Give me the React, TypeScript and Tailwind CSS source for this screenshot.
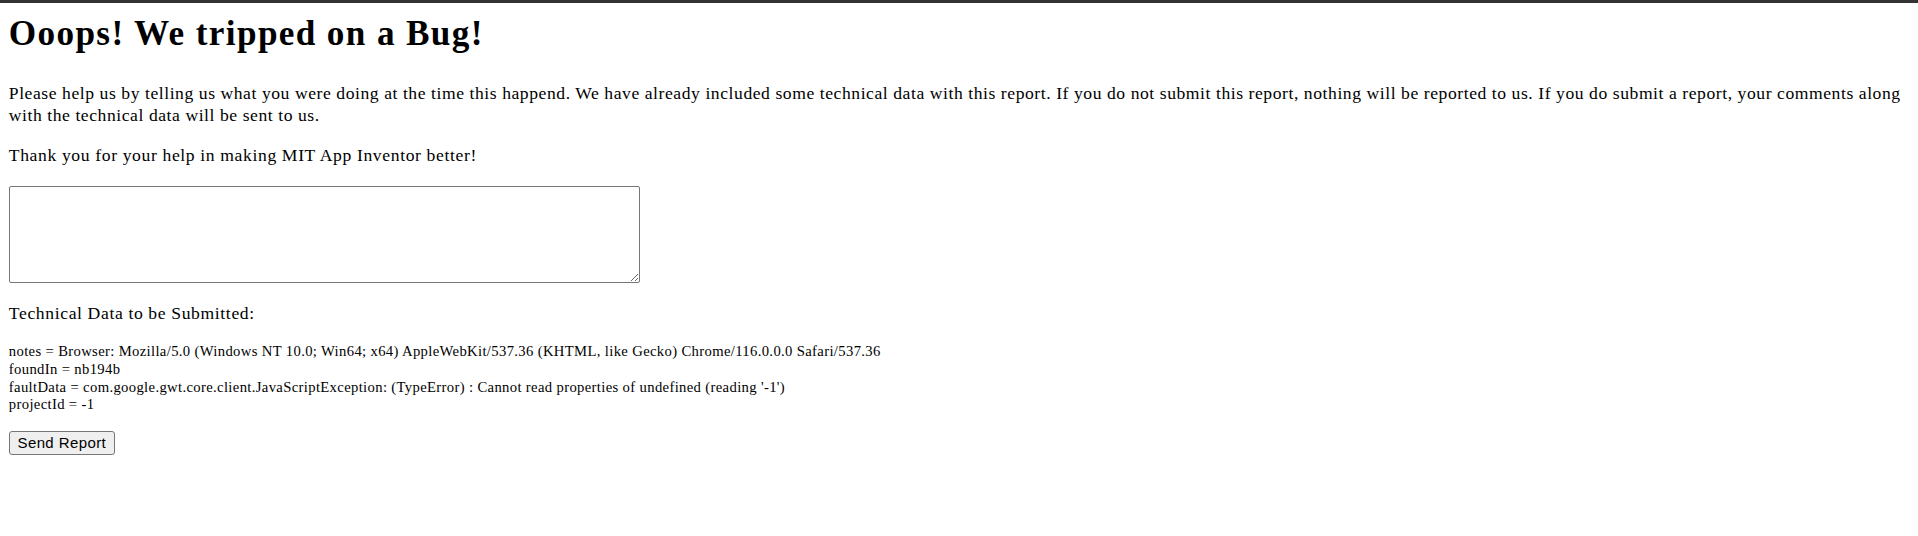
import React from "react";

export default function App() {
  return (
    <div
      className="min-h-[536px] bg-white text-black text-[17.6px] leading-[22px] tracking-[0.63px]"
      style={{ fontFamily: '"Liberation Serif", "Times New Roman", serif' }}
    >
      <div className="h-[3px] bg-[#333333]" />
      <div className="px-[8.8px]">
        <h1 className="mt-[10.6px] text-[35.2px] leading-[39px] font-bold tracking-[1.36px]">
          Ooops! We tripped on a Bug!
        </h1>
        <p className="mt-[29.2px] tracking-[0.56px]">
          Please help us by telling us what you were doing at the time this happend. We have already included some technical data with this report. If you do not submit this report, nothing will be reported to us. If you do submit a report, your comments along with the technical data will be sent to us.
        </p>
        <p className="mt-[18.6px]">Thank you for your help in making MIT App Inventor better!</p>
        <textarea
          className="mt-[19.6px] block w-[631px] h-[97px] border border-[#767676] rounded-[2px] bg-white p-[2px] outline-none resize"
          aria-label="comments"
        />
        <div className="mt-[19px]">Technical Data to be Submitted:</div>
        <div className="mt-[19.5px] text-[14.67px] leading-[17.6px] tracking-[0.35px]">
          <div>notes = Browser: Mozilla/5.0 (Windows NT 10.0; Win64; x64) AppleWebKit/537.36 (KHTML, like Gecko) Chrome/116.0.0.0 Safari/537.36</div>
          <div>foundIn = nb194b</div>
          <div>faultData = com.google.gwt.core.client.JavaScriptException: (TypeError) : Cannot read properties of undefined (reading '-1')</div>
          <div>projectId = -1</div>
        </div>
        <button
          className="mt-[17px] flex items-center justify-center w-[106px] h-[24px] border border-[#767676] rounded-[3px] bg-[#efefef] text-[15px] tracking-[0.4px] text-black"
          style={{ fontFamily: '"Liberation Sans", Arial, sans-serif' }}
        >
          Send Report
        </button>
      </div>
    </div>
  );
}
